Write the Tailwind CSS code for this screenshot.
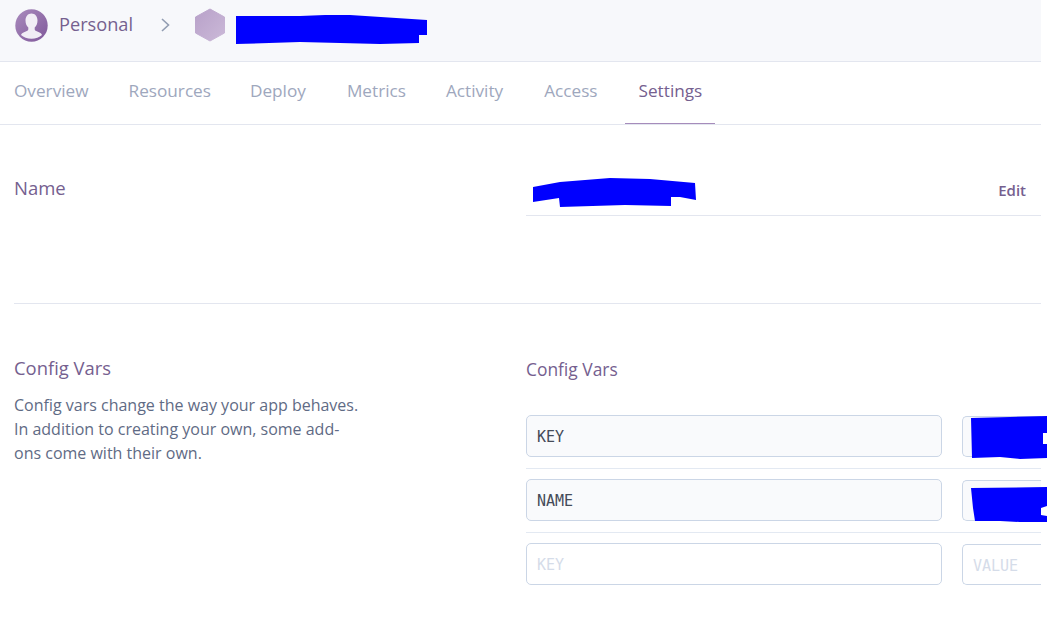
<!DOCTYPE html>
<html lang="en">
<head>
    <meta charset="UTF-8">
    <title>Settings</title>
    <script src="https://cdn.jsdelivr.net/npm/@tailwindcss/browser@4"></script>
</head>
<body class="bg-white h-[622px] w-[1047px] overflow-hidden relative font-['Open_Sans',sans-serif]">
    <div class="w-[1041px] overflow-hidden">
        <!-- Header -->
        <header class="h-[62px] bg-[#f7f8fb] border-b border-[#e3e6ef] flex items-center pl-[15px] pb-[11px]">
            <svg class="w-[33px] h-[33px]" viewBox="0 0 33 33">
                <defs>
                    <linearGradient id="avatar" x1="0" y1="0" x2="1" y2="1">
                        <stop offset="0" stop-color="#a98bbd"/>
                        <stop offset="1" stop-color="#80589a"/>
                    </linearGradient>
                </defs>
                <circle cx="16.5" cy="16.5" r="16.2" fill="url(#avatar)"/>
                <path d="M16.500 4.500c-3.600 0-6 2.800-6 7 0 3.200 1.200 5.600 2.800 7.100v1.700c0 .9-.6 1.400-1.500 1.800l-3.300 1.300c-1.300.5-2.100 1.300-2.500 2.500 2.500 2.400 6.400 3.800 10.500 3.800s8-1.400 10.500-3.800c-.4-1.200-1.200-2-2.500-2.500l-3.300-1.300c-.9-.4-1.500-.9-1.500-1.800v-1.700c1.600-1.500 2.800-3.900 2.800-7.100 0-4.200-2.400-7-6-7z" fill="#f1edf5"/>
            </svg>
            <span class="ml-[11px] text-[18.2px] text-[#75608f]">Personal</span>
            <svg class="ml-[28px] w-[9px] h-[14px]" viewBox="0 0 9 14" fill="none" stroke="#929db2" stroke-width="1.6"><path d="M1 1 7.500 7 1 13"/></svg>
            <svg class="ml-[24px] w-[32px] h-[34px]" viewBox="0 0 32 34">
                <defs>
                    <linearGradient id="hex" x1="0" y1="0" x2="1" y2="1">
                        <stop offset="0" stop-color="#b8a1c9"/>
                        <stop offset="1" stop-color="#cbb9d8"/>
                    </linearGradient>
                </defs>
                <path d="M16 1 30.500 9v16L16 33 1.500 25V9z" fill="url(#hex)" stroke="url(#hex)" stroke-linejoin="round"/>
            </svg>
        </header>

        <!-- Tabs -->
        <nav class="h-[63px] border-b border-[#e3e6ef] flex pl-[14px] text-[17.2px] text-[#9ea7bd]">
            <a class="mr-[40px] leading-[58px]">Overview</a>
            <a class="mr-[39px] leading-[58px]">Resources</a>
            <a class="mr-[41px] leading-[58px]">Deploy</a>
            <a class="mr-[40px] leading-[58px]">Metrics</a>
            <a class="mr-[41px] leading-[58px]">Activity</a>
            <a class="mr-[41px] leading-[58px]">Access</a>
            <a class="leading-[58px] text-[#75608f] relative">Settings
                <span class="absolute -left-[14px] -right-[13px] top-[61px] h-px bg-[#a68cbb]"></span>
            </a>
        </nav>

        <!-- Name -->
        <section class="ml-[14px] h-[179px] border-b border-[#e3e6ef] flex">
            <h2 class="w-[512px] pt-[51px] text-[18.500px] leading-[24px] text-[#75608f]">Name</h2>
            <div class="flex-1">
                <div class="mt-[43px] h-[48px] border-b border-[#e3e6ef] flex items-center justify-end pr-[15px]">
                    <span class="text-[15px] font-semibold text-[#75608f] mb-[2px]">Edit</span>
                </div>
            </div>
        </section>

        <!-- Config Vars -->
        <section class="ml-[14px] flex">
            <div class="w-[512px] pt-[52px]">
                <h2 class="text-[18.400px] leading-[24px] text-[#75608f]">Config Vars</h2>
                <p class="mt-[13px] w-[350px] text-[16px] leading-[24px] text-[#5f6b85]">Config vars change the way your app behaves. In addition to creating your own, some add-ons come with their own.</p>
            </div>
            <div class="flex-1 pt-[53px]">
                <h3 class="text-[17.400px] leading-[24px] text-[#75608f]">Config Vars</h3>
                <div class="mt-[34px] flex flex-col">
                    <div class="flex gap-[20px] h-[54px] border-b border-[#e3e9f2]">
                        <div class="w-[416px] h-[42px] shrink-0 rounded-[5px] border border-[#cbd6e6] bg-[#f9fafc] px-[10px] leading-[42px] text-[15px] text-[#454b58] font-['DejaVu_Sans_Mono',monospace]">KEY</div>
                        <div class="flex-1 h-[41px] rounded-l-[5px] border border-r-0 border-[#cbd6e6] bg-[#f9fafc] mt-[1px]"></div>
                    </div>
                    <div class="flex gap-[20px] h-[64px] pt-[10px] border-b border-[#e3e9f2]">
                        <div class="w-[416px] h-[42px] shrink-0 rounded-[5px] border border-[#cbd6e6] bg-[#f9fafc] px-[10px] leading-[42px] text-[15px] text-[#454b58] font-['DejaVu_Sans_Mono',monospace]">NAME</div>
                        <div class="flex-1 h-[41px] rounded-l-[5px] border border-r-0 border-[#cbd6e6] bg-[#f9fafc] mt-[1px]"></div>
                    </div>
                    <div class="flex gap-[20px] pt-[10px]">
                        <div class="w-[416px] h-[42px] shrink-0 rounded-[5px] border border-[#cbd6e6] bg-white px-[10px] leading-[42px] text-[15px] text-[#d5dce9] font-['DejaVu_Sans_Mono',monospace]">KEY</div>
                        <div class="flex-1 h-[41px] rounded-l-[5px] border border-r-0 border-[#cbd6e6] bg-white mt-[1px] px-[10px] leading-[42px] text-[15px] text-[#d5dce9] font-['DejaVu_Sans_Mono',monospace]">VALUE</div>
                    </div>
                </div>
            </div>
        </section>
    </div>

    <!-- Blue scribbles over the redacted values -->
    <svg class="absolute inset-0 w-[1047px] h-[622px] pointer-events-none" viewBox="0 0 1047 622" fill="#0000ff">
        <path d="M236 16 L300 16 L325 15 L350 15 L427 20 L427 35 L419 35 L419 43 L380 44 L340 43 L300 42 L236 44 Z"/>
        <path d="M533 187 L560 182 L610 178 L650 179 L695 183 L696 200 L680 197 L671 197 L671 206 L625 205 L560 207 L559 198 L533 202 Z"/>
        <path d="M971 418 L1010 417 L1047 416 L1047 433 L1043 433 L1043 444 L1047 444 L1047 458 L1020 459 L1000 457 L972 458 Z"/>
        <path d="M971 488 L1047 487 L1047 506 L1041 508 L1041 515 L1047 516 L1047 522 L1020 522 L1000 521 L975 521 L973 508 Z"/>
    </svg>
</body>
</html>
